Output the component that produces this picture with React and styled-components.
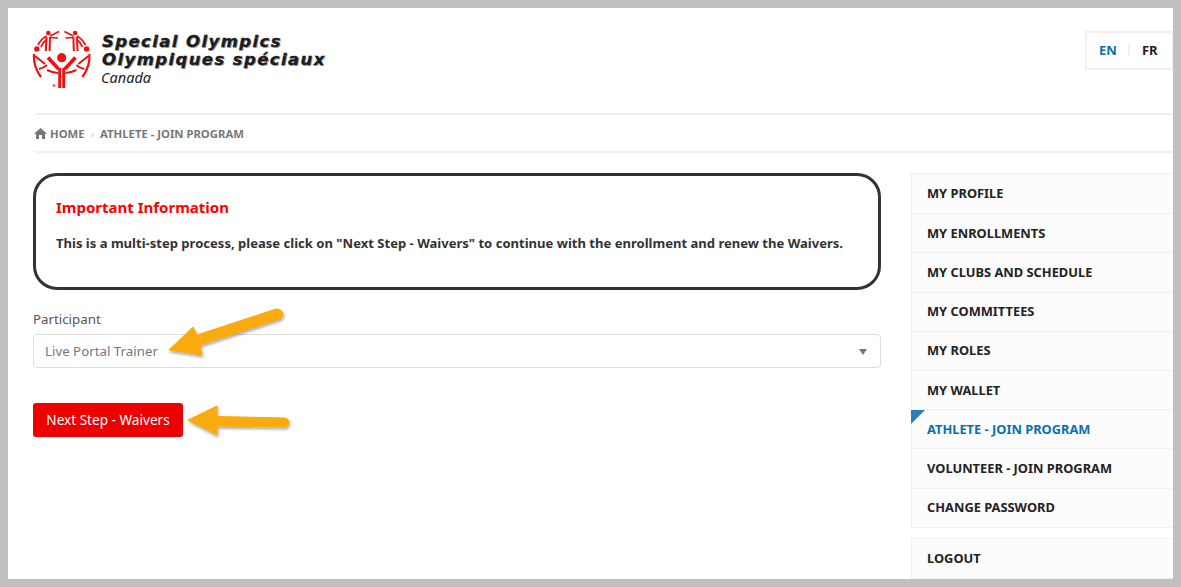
import React from "react";
import styled, { createGlobalStyle } from "styled-components";

const Global = createGlobalStyle`
  html, body { margin: 0; padding: 0; background: #c0c0c0; }
  body { font-family: "Noto Sans", "Open Sans", sans-serif; }
  * { box-sizing: border-box; }
`;

const Frame = styled.div`
  position: relative;
  width: 1181px;
  height: 587px;
  padding: 8px;
  background: #c0c0c0;
  overflow: hidden;
`;
const Page = styled.div`
  height: 571px;
  background: #fff;
  padding-left: 25px;
  display: flex;
  flex-direction: column;
`;
const Header = styled.header`
  height: 105px;
  flex: none;
  display: flex;
  justify-content: space-between;
  align-items: flex-start;
`;
const Brand = styled.div`
  display: flex;
  gap: 10px;
  padding-top: 20px;
`;
const BrandText = styled.div`
  display: flex;
  flex-direction: column;
  padding-top: 5px;
`;
const BrandLine = styled.div`
  font-family: "DejaVu Sans", sans-serif;
  font-weight: 700;
  font-style: italic;
  font-size: 16.5px;
  line-height: 18px;
  letter-spacing: 1.4px;
  color: #1c1c1c;
  -webkit-text-stroke: 0.35px #1c1c1c;
  text-shadow: 1px 1px 0 #aaa;
  white-space: nowrap;
`;
const BrandSub = styled.div`
  font-style: italic;
  font-size: 14.5px;
  line-height: 17px;
  color: #222;
  margin-left: -1px;
`;
const LangBox = styled.div`
  margin-top: 23px;
  width: 88px;
  height: 39px;
  padding-bottom: 1px;
  border: 2px solid #f0f0f0;
  border-right-width: 1px;
  display: flex;
  align-items: center;
  font-size: 13px;
  font-weight: 700;
`;
const Lang = styled.span`
  width: ${(p) => p.$w}px;
  padding-left: ${(p) => p.$pad}px;
  color: ${(p) => (p.$active ? "#0b6fae" : "#222")};
`;
const LangSep = styled.span`
  width: 2px;
  height: 12px;
  background: #f0f0f0;
`;
const Breadcrumb = styled.nav`
  height: 40px;
  flex: none;
  border: 2px solid #f0f0f0;
  border-right: none;
  border-left: none;
  border-radius: 5px 0 0 5px;
  display: flex;
  align-items: center;
  padding-left: 1px;
  gap: 3px;
  font-size: 11.3px;
  font-weight: 700;
  color: #777;
  text-transform: uppercase;
`;
const Chevron = styled.span`
  color: #ccc;
  font-weight: 400;
  margin: 0 3px;
`;
const Columns = styled.div`
  display: flex;
  justify-content: space-between;
  padding-top: 20px;
`;
const Main = styled.main`
  width: 848px;
`;
const Notice = styled.section`
  height: 117px;
  border: 3px solid #333;
  border-radius: 24px;
  padding: 20px 20px 0;
`;
const NoticeTitle = styled.h2`
  margin: 0;
  font-size: 15px;
  line-height: 22px;
  font-weight: 700;
  color: #f00;
`;
const NoticeText = styled.p`
  margin: 15px 0 0;
  font-size: 13.05px;
  line-height: 20px;
  font-weight: 700;
  color: #333;
  white-space: nowrap;
`;
const FieldLabel = styled.label`
  display: block;
  margin-top: 20px;
  font-size: 13.3px;
  line-height: 18px;
  color: #555;
`;
const SelectBox = styled.div`
  margin-top: 6px;
  height: 34px;
  border: 1px solid #ddd;
  border-radius: 4px;
  display: flex;
  justify-content: space-between;
  align-items: center;
  padding: 0 13px 1px 11px;
  font-size: 13.3px;
  color: #777;
`;
const Caret = styled.span`
  width: 0;
  height: 0;
  border-left: 4px solid transparent;
  border-right: 4px solid transparent;
  border-top: 6px solid #777;
  margin-top: 3px;
`;
const NextButton = styled.button`
  display: block;
  margin-top: 35px;
  width: 150px;
  height: 34px;
  border: none;
  border-radius: 3px;
  background: #ee0000;
  color: #fff;
  font-family: inherit;
  font-size: 13.6px;
  padding: 0 0 2px;
`;
const Side = styled.aside`
  width: 262px;
  display: flex;
  flex-direction: column;
  gap: 10px;
`;
const Menu = styled.ul`
  margin: 0;
  padding: 0;
  list-style: none;
  border: 1px solid #f0f0f0;
  border-right: none;
  background: #fcfcfc;
`;
const Item = styled.li`
  position: relative;
  height: ${(p) => p.$h || 39.2}px;
  display: flex;
  align-items: center;
  padding: 0 0 1px 15px;
  font-size: 12.85px;
  font-weight: 700;
  text-transform: uppercase;
  color: ${(p) => (p.$active ? "#0b6fae" : "#222")};
  & + & { border-top: 1px solid #f0f0f0; }
  ${(p) =>
    p.$active &&
    `&::before {
      content: "";
      position: absolute;
      left: -1px;
      top: 0;
      border-top: 14px solid #2b7fb8;
      border-right: 14px solid transparent;
    }`}
`;
const ArrowLayer = styled.svg`
  position: absolute;
  inset: 0;
  pointer-events: none;
`;

const half = (
  <>
    <circle cx="16.3" cy="5" r="2.3" fill="#ee1111" stroke="none" />
    <circle cx="4.8" cy="21" r="2.7" fill="#ee1111" stroke="none" />
    <path d="M14.5 9 L13.8 23 M18 9 L17.6 23" strokeWidth="2" />
    <path d="M18 8 L27 3.5 M18 9.5 L26 10" strokeWidth="1.7" />
    <path d="M14.5 8 Q9 11 6 17 M15 11 Q11 14 9 19" strokeWidth="1.8" />
    <path d="M2 26 Q1 38 9 49" strokeWidth="2.2" />
    <path d="M3 28 L13 36" strokeWidth="2" />
    <path d="M7 41 Q12 40 15 37" strokeWidth="2" />
    <path d="M16 29.5 L26.5 41" strokeWidth="3.6" />
    <path d="M27.7 40 V60" strokeWidth="3" />
    <path d="M15 42 Q21 45 26 45" strokeWidth="2" />
  </>
);

const Logo = () => (
  <svg width="60" height="60" viewBox="0 0 60 60" style={{ marginLeft: -1 }}>
    <circle cx="29.7" cy="29.7" r="4.6" fill="#ee1111" />
    <circle cx="22" cy="57.5" r="1.5" fill="#f06a6a" />
    <g fill="none" stroke="#ee1111">{half}</g>
    <g fill="none" stroke="#ee1111" transform="translate(59.4 0) scale(-1 1)">{half}</g>
  </svg>
);

const HomeIcon = () => (
  <svg width="13" height="11" viewBox="0 0 13 11">
    <path fill="#777" d="M6.5 0 L13 5.7 H11 V11 H8 V7 H5 V11 H2 V5.7 H0 Z" />
  </svg>
);

const items = [
  "My Profile",
  "My Enrollments",
  "My Clubs and Schedule",
  "My Committees",
  "My Roles",
  "My Wallet",
  "Athlete - Join Program",
  "Volunteer - Join Program",
  "Change Password",
];

export default function App() {
  return (
    <Frame>
      <Global />
      <Page>
        <Header>
          <Brand>
            <Logo />
            <BrandText>
              <BrandLine>Special Olympics</BrandLine>
              <BrandLine>Olympiques spéciaux</BrandLine>
              <BrandSub>Canada</BrandSub>
            </BrandText>
          </Brand>
          <LangBox>
            <Lang $active $w={42} $pad={12}>EN</Lang>
            <LangSep />
            <Lang $w={43} $pad={12}>FR</Lang>
          </LangBox>
        </Header>
        <Breadcrumb>
          <HomeIcon />
          <span>Home</span>
          <Chevron>›</Chevron>
          <span>Athlete - Join Program</span>
        </Breadcrumb>
        <Columns>
          <Main>
            <Notice>
              <NoticeTitle>Important Information</NoticeTitle>
              <NoticeText>
                This is a multi-step process, please click on "Next Step - Waivers" to continue with the enrollment and renew the Waivers.
              </NoticeText>
            </Notice>
            <FieldLabel>Participant</FieldLabel>
            <SelectBox>
              <span>Live Portal Trainer</span>
              <Caret />
            </SelectBox>
            <NextButton>Next Step - Waivers</NextButton>
          </Main>
          <Side>
            <Menu>
              {items.map((t) => (
                <Item key={t} $active={t.startsWith("Athlete")}>{t}</Item>
              ))}
            </Menu>
            <Menu>
              <Item $h={39}>Logout</Item>
            </Menu>
          </Side>
        </Columns>
      </Page>
      <ArrowLayer width="1181" height="587" viewBox="0 0 1181 587">
        <defs>
          <filter id="sh" x="-20%" y="-20%" width="140%" height="150%">
            <feDropShadow dx="1" dy="2" stdDeviation="1.5" floodColor="#000" floodOpacity="0.35" />
          </filter>
        </defs>
        <g fill="#f9ab0d" stroke="#f9ab0d" strokeWidth="1" strokeLinejoin="round" filter="url(#sh)">
          <path d="M169 350 L193 327 L197 335 L276 309 Q282 309 283 314 Q283 318 279 319 L200 345 L202 355 Z" />
          <path d="M188 420 L217 406 L217 416.5 L285 418 Q289 419 289 422 Q289 426 285 427 L217 426 L217 435 Z" />
        </g>
      </ArrowLayer>
    </Frame>
  );
}
